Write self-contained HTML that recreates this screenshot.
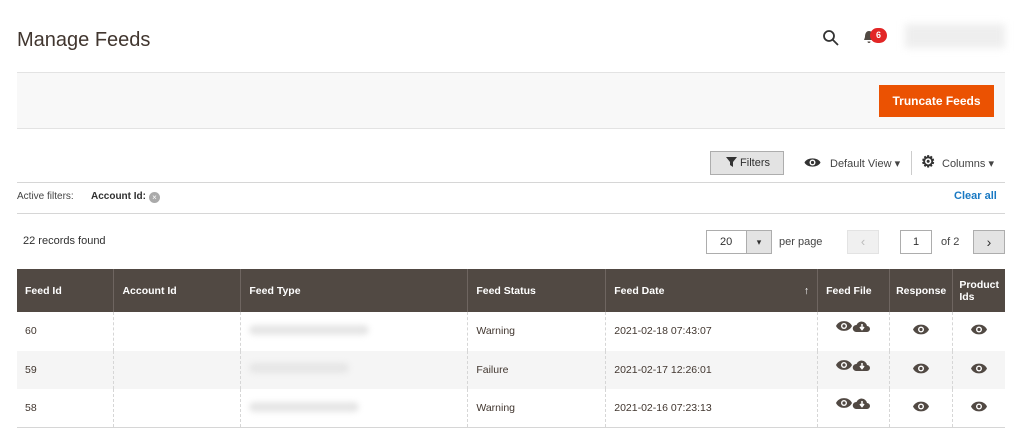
<!DOCTYPE html>
<html><head><style>
*{box-sizing:border-box;margin:0;padding:0}
body{width:1024px;height:430px;overflow:hidden;background:#fff;font-family:"Liberation Sans",sans-serif;color:#303030;position:relative}
.a{position:absolute}
.t{font-size:11px}
table{position:absolute;left:17px;top:269px;border-collapse:collapse;width:988px;font-size:10.5px}
th{background:#514943;color:#fff;text-align:left;font-weight:bold;padding:0 8px;height:43px;border-left:1px solid #6e6560}
th:first-child{border-left:none}
td{height:38.5px;padding:0 8px;border-left:1px dashed #d6d6d6;color:#41362f}
td:first-child{border-left:none}
tr.g td{background:#f5f5f5}
tr:last-child td{border-bottom:1px solid #d6d6d6}
.c{text-align:center}
.blur{display:inline-block;height:10px;background:#e6e6e6;border-radius:5px;filter:blur(3px)}
</style></head><body>
<div class="a" style="left:17px;top:29px;font-size:20px;color:#41362f">Manage Feeds</div>
<svg class="a" style="left:822px;top:29px" width="18" height="18" viewBox="0 0 18 18"><circle cx="7" cy="7" r="5" fill="none" stroke="#333" stroke-width="1.8"/><path d="M11 11l5 5" stroke="#333" stroke-width="1.8"/></svg>
<svg class="a" style="left:863px;top:30px" width="12" height="14" viewBox="0 0 12 14"><path d="M6 1C3 1 2 4 2 7L1 10h10L10 7C10 4 9 1 6 1zM4.5 11.5h3a1.5 1.5 0 0 1-3 0z" fill="#514943"/></svg>
<div class="a" style="left:870px;top:28px;width:17px;height:15px;border-radius:8px;background:#e22626;color:#fff;font-size:9px;font-weight:bold;text-align:center;line-height:15px">6</div>
<div class="a" style="left:905px;top:24px;width:100px;height:24px;background:#eee;filter:blur(4px)"></div>
<div class="a" style="left:17px;top:72px;width:988px;height:57px;background:#f8f8f8;border-top:1px solid #e3e3e3;border-bottom:1px solid #e3e3e3"></div>
<div class="a" style="left:879px;top:85px;width:115px;height:32px;background:#eb5202;color:#fff;font-weight:bold;font-size:12px;text-align:center;line-height:32px">Truncate Feeds</div>
<div class="a" style="left:710px;top:151px;width:74px;height:24px;background:#e3e3e3;border:1px solid #adadad;font-size:11px;line-height:22px;padding-left:15px"><svg width="11" height="10" viewBox="0 0 11 10" style="vertical-align:-1px"><path d="M0 0h11L7 5v5L4 8V5z" fill="#333"/></svg> Filters</div>
<svg class="a" style="left:804px;top:157px" width="17" height="11" viewBox="0 0 17 11"><path d="M0.5 5.5C3 0 14 0 16.5 5.5C14 11 3 11 0.5 5.5z" fill="#333"/><circle cx="8.5" cy="5.5" r="3" fill="#fff"/><circle cx="8.5" cy="5.5" r="1.6" fill="#333"/></svg>
<div class="a t" style="left:830px;top:157px;color:#444">Default View &#9662;</div>
<div class="a" style="left:911px;top:151px;width:1px;height:24px;background:#ccc"></div>
<div class="a" style="left:921px;top:152px;font-size:16px;color:#333;font-weight:bold">&#9881;</div>
<div class="a t" style="left:942px;top:157px;color:#444">Columns &#9662;</div>
<div class="a" style="left:17px;top:182px;width:988px;height:1px;background:#d6d6d6"></div>
<div class="a" style="left:17px;top:191px;font-size:10px;color:#444">Active filters:</div>
<div class="a" style="left:91px;top:191px;font-size:10px;color:#303030;font-weight:bold">Account Id:</div>
<div class="a" style="left:149px;top:192px;width:11px;height:11px;border-radius:50%;background:#aaa;color:#fff;font-size:8px;text-align:center;line-height:11px">×</div>
<div class="a" style="left:954px;top:190px;font-size:11px;color:#1979c3;font-weight:bold">Clear all</div>
<div class="a" style="left:17px;top:213px;width:988px;height:1px;background:#d6d6d6"></div>
<div class="a t" style="left:23px;top:235px">22 records found</div>
<div class="a" style="left:706px;top:230px;width:66px;height:24px;border:1px solid #adadad;font-size:11px;line-height:22px;padding-left:13px">20</div>
<div class="a" style="left:746px;top:230px;width:26px;height:24px;background:#e3e3e3;border:1px solid #adadad;font-size:9px;text-align:center;line-height:22px">&#9662;</div>
<div class="a t" style="left:779px;top:236px;color:#444">per page</div>
<div class="a" style="left:847px;top:230px;width:32px;height:24px;background:#f0f0f0;border:1px solid #e3e3e3;color:#bbb;text-align:center;line-height:22px;font-size:13px">&lsaquo;</div>
<div class="a" style="left:900px;top:230px;width:32px;height:24px;border:1px solid #adadad;font-size:11px;text-align:center;line-height:22px">1</div>
<div class="a t" style="left:941px;top:236px;color:#444">of 2</div>
<div class="a" style="left:973px;top:230px;width:32px;height:24px;background:#e3e3e3;border:1px solid #adadad;text-align:center;line-height:22px;font-size:14px">&rsaquo;</div>
<table>
<tr><th style="width:97px">Feed Id</th><th style="width:127px">Account Id</th><th style="width:227px">Feed Type</th><th style="width:138px">Feed Status</th><th style="width:212px">Feed Date<span style="float:right;font-weight:normal">&uarr;</span></th><th style="width:72px">Feed File</th><th style="width:62px;padding:0 6px">Response</th><th style="padding:0 6px;line-height:12px">Product Ids</th></tr>
<tr><td>60</td><td></td><td><span class="blur" style="width:120px"></span></td><td>Warning</td><td>2021-02-18 07:43:07</td><td class="c" style="vertical-align:top;padding-top:7px"><svg width="40" height="16" viewBox="0 0 40 16"><path d="M2 7C5 0.5 15 0.5 18 7C15 13.5 5 13.5 2 7z" fill="#514943"/><circle cx="10" cy="7" r="3" fill="#fff"/><circle cx="10" cy="7" r="1.6" fill="#514943"/><path d="M22 13a3.5 3.5 0 0 1 0.5-7 5.5 5.5 0 0 1 10.5 1 3 3 0 0 1 0 6z" fill="#514943"/><path d="M28 5v5M26 8l2 2.5 2-2.5" stroke="#fff" stroke-width="1.5" fill="none"/></svg></td><td class="c"><svg width="18" height="13" viewBox="0 0 18 13"><path d="M1 6.5C4 0 14 0 17 6.5C14 13 4 13 1 6.5z" fill="#514943"/><circle cx="9" cy="6.5" r="3" fill="#fff"/><circle cx="9" cy="6.5" r="1.6" fill="#514943"/></svg></td><td class="c"><svg width="18" height="13" viewBox="0 0 18 13"><path d="M1 6.5C4 0 14 0 17 6.5C14 13 4 13 1 6.5z" fill="#514943"/><circle cx="9" cy="6.5" r="3" fill="#fff"/><circle cx="9" cy="6.5" r="1.6" fill="#514943"/></svg></td></tr>
<tr class="g"><td>59</td><td></td><td><span class="blur" style="width:100px"></span></td><td>Failure</td><td>2021-02-17 12:26:01</td><td class="c" style="vertical-align:top;padding-top:7px"><svg width="40" height="16" viewBox="0 0 40 16"><path d="M2 7C5 0.5 15 0.5 18 7C15 13.5 5 13.5 2 7z" fill="#514943"/><circle cx="10" cy="7" r="3" fill="#fff"/><circle cx="10" cy="7" r="1.6" fill="#514943"/><path d="M22 13a3.5 3.5 0 0 1 0.5-7 5.5 5.5 0 0 1 10.5 1 3 3 0 0 1 0 6z" fill="#514943"/><path d="M28 5v5M26 8l2 2.5 2-2.5" stroke="#fff" stroke-width="1.5" fill="none"/></svg></td><td class="c"><svg width="18" height="13" viewBox="0 0 18 13"><path d="M1 6.5C4 0 14 0 17 6.5C14 13 4 13 1 6.5z" fill="#514943"/><circle cx="9" cy="6.5" r="3" fill="#fff"/><circle cx="9" cy="6.5" r="1.6" fill="#514943"/></svg></td><td class="c"><svg width="18" height="13" viewBox="0 0 18 13"><path d="M1 6.5C4 0 14 0 17 6.5C14 13 4 13 1 6.5z" fill="#514943"/><circle cx="9" cy="6.5" r="3" fill="#fff"/><circle cx="9" cy="6.5" r="1.6" fill="#514943"/></svg></td></tr>
<tr><td>58</td><td></td><td><span class="blur" style="width:110px"></span></td><td>Warning</td><td>2021-02-16 07:23:13</td><td class="c" style="vertical-align:top;padding-top:7px"><svg width="40" height="16" viewBox="0 0 40 16"><path d="M2 7C5 0.5 15 0.5 18 7C15 13.5 5 13.5 2 7z" fill="#514943"/><circle cx="10" cy="7" r="3" fill="#fff"/><circle cx="10" cy="7" r="1.6" fill="#514943"/><path d="M22 13a3.5 3.5 0 0 1 0.5-7 5.5 5.5 0 0 1 10.5 1 3 3 0 0 1 0 6z" fill="#514943"/><path d="M28 5v5M26 8l2 2.5 2-2.5" stroke="#fff" stroke-width="1.5" fill="none"/></svg></td><td class="c"><svg width="18" height="13" viewBox="0 0 18 13"><path d="M1 6.5C4 0 14 0 17 6.5C14 13 4 13 1 6.5z" fill="#514943"/><circle cx="9" cy="6.5" r="3" fill="#fff"/><circle cx="9" cy="6.5" r="1.6" fill="#514943"/></svg></td><td class="c"><svg width="18" height="13" viewBox="0 0 18 13"><path d="M1 6.5C4 0 14 0 17 6.5C14 13 4 13 1 6.5z" fill="#514943"/><circle cx="9" cy="6.5" r="3" fill="#fff"/><circle cx="9" cy="6.5" r="1.6" fill="#514943"/></svg></td></tr>
</table>
</body></html>
